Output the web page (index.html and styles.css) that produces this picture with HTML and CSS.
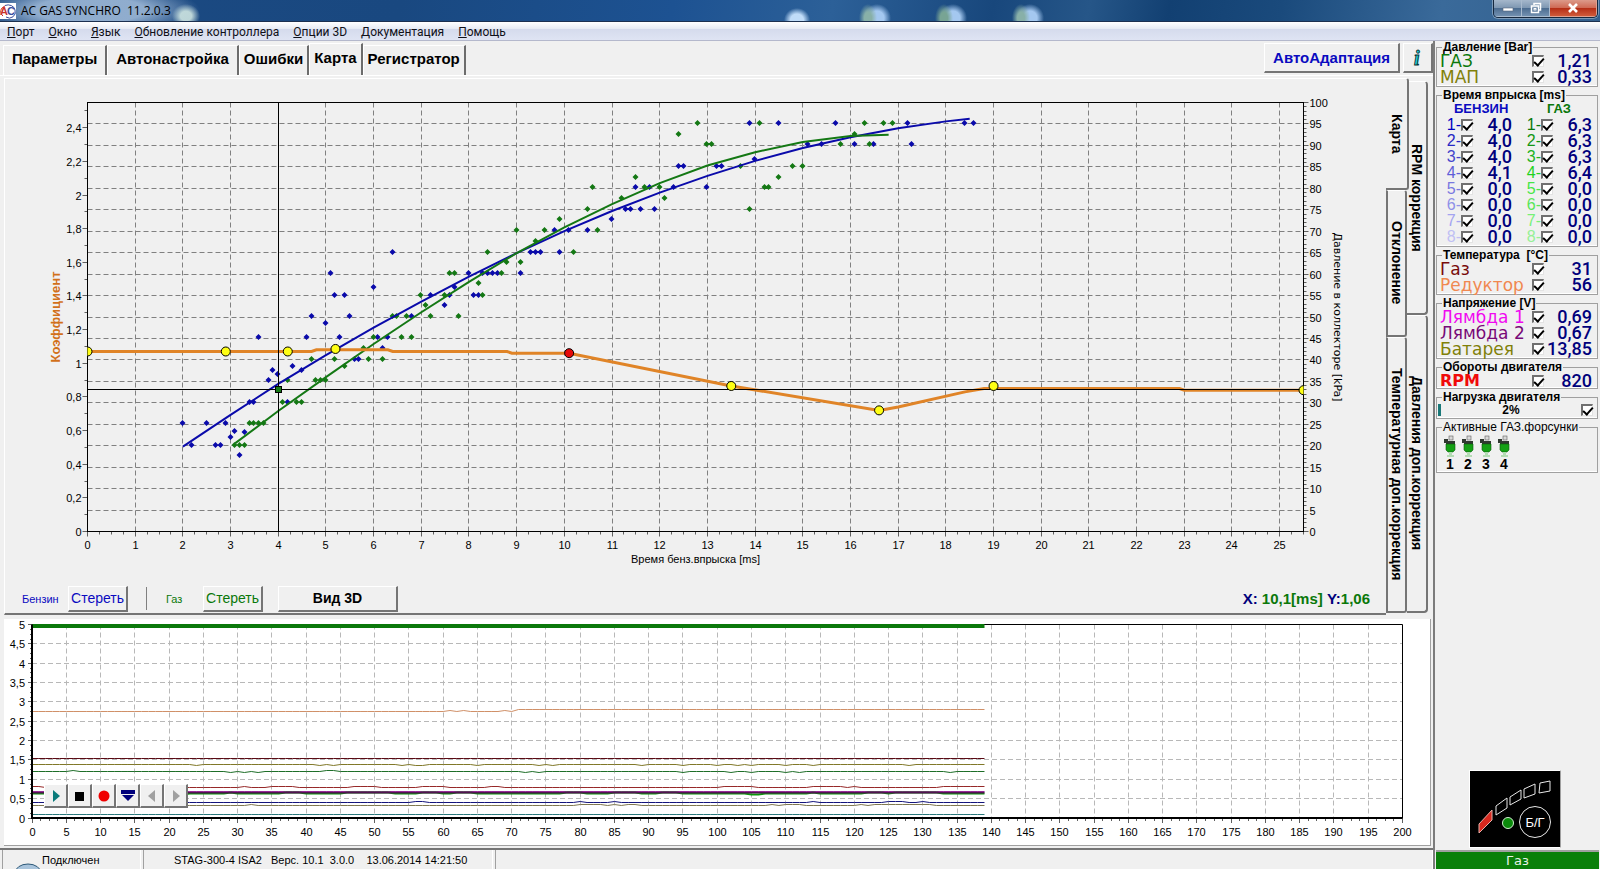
FILE: index.html
```html
<!DOCTYPE html>
<html lang="ru">
<head>
    <meta charset="UTF-8">
    <meta name="viewport" content="width=device-width, initial-scale=1.0">
    <title>AC GAS SYNCHRO 11.2.0.3</title>
    <link rel="stylesheet" href="styles.css">
</head>
<body>
    <div class="app">
        <header class="titlebar">
            <svg class="logo" width="16" height="16" viewBox="0 0 16 16">
                <rect width="16" height="16" fill="#fff"/>
                <path d="M3 13A7 6 0 0 1 5 3" fill="none" stroke="#c8322c" stroke-width="1"/>
                <path d="M5 2.500A7 6 0 0 1 15 7A6 6 0 0 1 6 14" fill="none" stroke="#3a4d9c" stroke-width="1"/>
                <text x="0" y="12" class="logo-a">A</text>
                <text x="7" y="12" class="logo-c">C</text>
            </svg>
            <span class="title">AC GAS SYNCHRO&nbsp; 11.2.0.3</span>
            <div class="window-buttons">
                <button aria-label="Свернуть"><svg width="12" height="12"><rect x="1" y="6" width="10" height="3" fill="#fff" stroke="#56657c" stroke-width=".6"/></svg></button>
                <button aria-label="Восстановить"><svg width="12" height="12" fill="none" stroke="#fff" stroke-width="1.500"><path d="M4 3V1.500H10.500V8H9"/><rect x="1.500" y="4" width="7" height="6.500"/><rect x="4" y="6.500" width="2" height="1.500" stroke-width="1"/></svg></button>
                <button class="close" aria-label="Закрыть"><svg width="12" height="12"><path d="M2 2L10 10M10 2L2 10" stroke="#fff" stroke-width="2.600"/></svg></button>
            </div>
        </header>

        <nav class="menu">
            <a href="#"><u>П</u>орт</a>
            <a href="#"><u>О</u>кно</a>
            <a href="#"><u>Я</u>зык</a>
            <a href="#"><u>О</u>бновление контроллера</a>
            <a href="#"><u>О</u>пции 3D</a>
            <a href="#"><u>Д</u>окументация</a>
            <a href="#"><u>П</u>омощь</a>
        </nav>

        <div class="main">
            <div class="left">
                <div class="top-row">
                    <div class="tabs">
                        <button class="tab tab-wide">Параметры</button>
                        <button class="tab tab-wide">Автонастройка</button>
                        <button class="tab">Ошибки</button>
                        <button class="tab active">Карта</button>
                        <button class="tab">Регистратор</button>
                    </div>
                    <button class="btn auto">АвтоАдаптация</button>
                    <button class="btn info" aria-label="Информация">
                        <svg width="14" height="20"><text x="3" y="17" class="info-i">i</text></svg>
                    </button>
                </div>

                <div class="map">
                    <div class="map-body">
                        <svg id="map-chart" class="chart"></svg>
                        <div class="map-tools">
                            <span class="small blue">Бензин</span>
                            <button class="btn erase blue">Стереть</button>
                            <span class="line"></span>
                            <span class="small green gas-label">Газ</span>
                            <button class="btn erase green">Стереть</button>
                            <button class="btn view">Вид 3D</button>
                            <span class="coords"><b>X:</b> 10,1[ms] <b>Y:</b>1,06</span>
                        </div>
                    </div>
                    <div class="side-tabs inner">
                        <button class="selected">Карта</button>
                        <button class="deviation">Отклонение</button>
                        <button class="temp">Температурная доп.коррекция</button>
                    </div>
                    <div class="side-tabs outer">
                        <button class="rpm">RPM коррекция</button>
                        <button class="pressure">Давления доп.коррекция</button>
                    </div>
                </div>

                <div class="recorder">
                    <svg id="rec-chart" class="chart"></svg>
                    <div class="player">
                        <button class="btn" aria-label="Пуск"><svg width="14" height="14"><path d="M4 1L11 7L4 13Z" fill="#0a7a7a"/></svg></button>
                        <button class="btn" aria-label="Стоп"><svg width="14" height="14"><rect x="2" y="3" width="9" height="9"/></svg></button>
                        <button class="btn" aria-label="Запись"><svg width="14" height="14"><circle cx="7" cy="7" r="5.500" fill="#f00000"/></svg></button>
                        <button class="btn" aria-label="Сохранить"><svg width="14" height="14" fill="#00007c"><rect x="0" y="1" width="14" height="4"/><path d="M1 6H13L7 12Z"/></svg></button>
                        <button class="btn" aria-label="Назад"><svg width="14" height="14"><path d="M10 1L3 7L10 13Z" fill="#a0a0a0"/></svg></button>
                        <button class="btn" aria-label="Вперёд"><svg width="14" height="14"><path d="M4 1L11 7L4 13Z" fill="#a0a0a0"/></svg></button>
                    </div>
                </div>

                <footer class="status">
                    <div class="cell state">
                        <svg class="orb" width="28" height="6"><ellipse cx="14" cy="10" rx="13" ry="9" fill="#a9c4dc" stroke="#2c5878"/></svg>
                        Подключен
                    </div>
                    <div class="cell device">STAG-300-4 ISA2&nbsp;&nbsp; Верс. 10.1&nbsp; 3.0.0&nbsp;&nbsp;&nbsp; 13.06.2014 14:21:50</div>
                    <div class="cell rest"></div>
                </footer>
            </div>

            <aside class="panel">
                <fieldset>
                    <legend>Давление [Bar]</legend>
                    <label class="row"><span class="c-gas">ГАЗ</span><input type="checkbox" checked><output>1,21</output></label>
                    <label class="row"><span class="c-map">МАП</span><input type="checkbox" checked><output>0,33</output></label>
                </fieldset>

                <fieldset>
                    <legend>Время впрыска [ms]</legend>
                    <div class="inj-head"><span class="blue">БЕНЗИН</span><span class="green">ГАЗ</span></div>
                    <div id="injection"></div>
                </fieldset>

                <fieldset>
                    <legend>Температура&nbsp; [°C]</legend>
                    <label class="row"><span class="c-tgas">Газ</span><input type="checkbox" checked><output>31</output></label>
                    <label class="row"><span class="c-red">Редуктор</span><input type="checkbox" checked><output>56</output></label>
                </fieldset>

                <fieldset>
                    <legend>Напряжение [V]</legend>
                    <label class="row"><span class="c-l1">Лямбда 1</span><input type="checkbox" checked><output>0,69</output></label>
                    <label class="row"><span class="c-l2">Лямбда 2</span><input type="checkbox" checked><output>0,67</output></label>
                    <label class="row"><span class="c-map">Батарея</span><input type="checkbox" checked><output>13,85</output></label>
                </fieldset>

                <fieldset class="low">
                    <legend>Обороты двигателя</legend>
                    <label class="row"><span class="c-rpm">RPM</span><input type="checkbox" checked><output>820</output></label>
                </fieldset>

                <fieldset class="low">
                    <legend>Нагрузка двигателя</legend>
                    <label class="load"><span class="load-bar" style="width: 2%"></span><span class="load-text">2%</span><input type="checkbox" checked></label>
                </fieldset>

                <fieldset class="injectors">
                    <legend class="plain">Активные ГАЗ.форсунки</legend>
                    <div id="injectors" class="injector-list"></div>
                </fieldset>

                <div class="switch">
                    <svg width="90" height="76" viewBox="0 0 90 76">
                        <path d="M9 53L22 39V49L9 62Z" fill="#d8281e" stroke="#e8b0a8"/>
                        <g fill="none" stroke="#e8e8e8">
                            <path d="M26 35L37 27V37L26 44Z"/>
                            <path d="M40 26L51 19V28L40 34Z"/>
                            <path d="M54 18L65 13V23L54 27Z"/>
                            <path d="M70 12L80 10V20L69 22Z"/>
                            <circle cx="65" cy="51" r="15.500"/>
                        </g>
                        <circle cx="38" cy="52" r="5.500" fill="#0a8a0a" stroke="#d0f0d0"/>
                        <text x="65" y="56" class="switch-text">Б/Г</text>
                    </svg>
                </div>
                <div class="fuel">Газ</div>
            </aside>
        </div>
    </div>

    <script src="script.js"></script>
</body>
</html>
```

FILE: styles.css
```css
* {
    box-sizing: border-box;
}

body {
    margin: 0;
    padding-bottom: 7px;
    background-color: #fff;
    font-family: "Liberation Sans", Arial, sans-serif;
    font-size: 11px;
    color: #000;
}

button {
    font-family: inherit;
    padding: 0;
    cursor: pointer;
}

svg {
    display: block;
}

.app {
    display: flex;
    flex-direction: column;
    height: calc(100vh - 7px);
    min-height: 700px;
    background-color: #f0f0f0;
}

.blue {
    color: #0a0ac0;
}

.green {
    color: #0a780a;
}

/* title bar */

.titlebar {
    display: flex;
    align-items: center;
    height: 22px;
    border-bottom: 1px solid #1c3050;
    background:
        radial-gradient(ellipse 14px 12px at 186px 16px, rgba(205, 228, 225, 0.9) 40%, transparent),
        radial-gradient(ellipse 110px 26px at 90px 10px, rgba(150, 178, 210, 0.95) 50%, transparent),
        radial-gradient(ellipse 13px 12px at 797px 20px, #c0dcf8 50%, transparent),
        radial-gradient(ellipse 9px 14px at 868px 18px, #88b0a8 40%, transparent),
        radial-gradient(ellipse 14px 14px at 877px 18px, #a4c8f0 50%, transparent),
        radial-gradient(ellipse 9px 14px at 944px 18px, #78a494 40%, transparent),
        radial-gradient(ellipse 14px 14px at 953px 18px, #a4c8f0 50%, transparent),
        radial-gradient(ellipse 9px 14px at 1021px 18px, #88b0a8 40%, transparent),
        radial-gradient(ellipse 14px 14px at 1030px 18px, #a4c8f0 50%, transparent),
        linear-gradient(100deg, #1c4a82 0%, #194880 25%, #1d5292 42%, #2c6098 52%, #18477c 62%, #265688 68%, #124072 73%, #1a4a7c 80%, #3a6a9a 90%, #33608e 100%);
}

.logo-a,
.logo-c {
    font-family: "Liberation Sans", Arial, sans-serif;
    font-weight: bold;
    font-size: 11px;
    fill: #c8322c;
}

.logo-c {
    fill: #3a4d9c;
}

.title {
    margin-left: 5px;
    font-family: "Open Sans", "Noto Sans", sans-serif;
    font-size: 12px;
    line-height: 20px;
    flex: 1;
}

.window-buttons {
    display: flex;
    align-self: flex-start;
    height: 18px;
    margin-right: 2px;
    border: 1px solid #16283e;
    border-top: none;
    border-radius: 0 0 5px 5px;
    overflow: hidden;
    box-shadow: 0 0 0 1px rgba(255, 255, 255, 0.35);
}

.window-buttons button {
    display: flex;
    align-items: center;
    justify-content: center;
    width: 28px;
    border: 1px solid #a8bace;
    border-width: 0 1px 1px 0;
    background: linear-gradient(#a5b7cb, #7f98b3 48%, #4c6c90 52%, #7290b0);
}

.window-buttons .close {
    width: 47px;
    border-color: #e0a090;
    background: linear-gradient(#dc9a8a, #cf6a55 48%, #b52e16 52%, #cf5a3a);
}

/* menu */

.menu {
    display: flex;
    gap: 14px;
    height: 19px;
    padding-left: 7px;
    border-bottom: 1px solid #b4b8cc;
    background: linear-gradient(#fff, #e8ecf5 36%, #d5dbed 40%, #dfe4f3);
    font-family: Roboto, "Open Sans", sans-serif;
    font-size: 12px;
    line-height: 20px;
}

.menu a {
    color: #101018;
    text-decoration: none;
    white-space: nowrap;
}

/* work area */

.main {
    display: flex;
    flex: 1;
    min-height: 0;
}

.left {
    display: flex;
    flex-direction: column;
    flex: 1;
    min-width: 0;
    border-right: 2px solid #7c7c7c;
}

.top-row {
    display: flex;
    align-items: flex-start;
    height: 35px;
    padding: 2px 0 0 3px;
    border-bottom: 1px solid #fff;
}

.tabs {
    display: flex;
    align-items: flex-end;
    flex: 1;
}

.tab {
    height: 30px;
    padding: 0 4px 4px;
    border: 1px solid #fff;
    border-right: 2px solid #6c6c6c;
    border-bottom: none;
    background-color: #f0f0f0;
    font-size: 15px;
    font-weight: bold;
}

.tab-wide {
    padding: 0 8px 4px;
}

.tab.active {
    height: 32px;
}

.btn {
    display: flex;
    align-items: center;
    justify-content: center;
    border: 1px solid #fff;
    border-right: 2px solid #757575;
    border-bottom: 2px solid #757575;
    background-color: #f0f0f0;
}

.auto {
    width: 136px;
    height: 30px;
    color: #0a0ac0;
    font-size: 15px;
    font-weight: bold;
}

.info {
    width: 30px;
    height: 30px;
    margin-left: 3px;
}

.info-i {
    font: italic bold 20px "Liberation Serif", serif;
    fill: #20d0d8;
    stroke: #083838;
    stroke-width: 1;
}

.map {
    display: flex;
    flex: 1;
    min-height: 0;
    margin: 2px 5px 0 4px;
}

.map-body {
    display: flex;
    flex-direction: column;
    flex: 1;
    min-width: 0;
    border-top: 1px solid #fff;
    border-left: 1px solid #fff;
    border-bottom: 2px solid #757575;
}

.chart {
    width: 100%;
    flex: 1;
    min-height: 0;
}

.map-tools {
    display: flex;
    align-items: center;
    height: 29px;
    padding: 0 16px 0 17px;
}

.erase {
    width: 60px;
    height: 26px;
    font-size: 14px;
}

.map-tools .erase {
    margin-left: 10px;
}

.small {
    width: 36px;
}

.line {
    width: 1px;
    height: 23px;
    margin: 0 19px 0 18px;
    background-color: #808080;
}

.gas-label {
    width: 27px;
}

.view {
    width: 120px;
    height: 26px;
    margin-left: 15px;
    font-size: 14px;
    font-weight: bold;
}

.coords {
    margin-left: auto;
    color: #0a780a;
    font-size: 15px;
    font-weight: bold;
}

.coords b {
    color: #00007c;
}

.side-tabs {
    display: flex;
    flex-direction: column;
    width: 21px;
    padding-bottom: 2px;
}

.side-tabs.outer {
    padding-top: 3px;
}

.side-tabs button {
    display: flex;
    align-items: center;
    justify-content: center;
    width: 21px;
    border: 1px solid #fff;
    border-left: none;
    border-right: 2px solid #757575;
    border-bottom: 2px solid #757575;
    border-radius: 0 4px 4px 0;
    background-color: #f0f0f0;
    font-size: 14px;
    font-weight: bold;
    writing-mode: vertical-rl;
    white-space: nowrap;
}

.side-tabs.inner button {
    border-left: 2px solid #757575;
    border-radius: 0 3px 3px 0;
}

.side-tabs.inner .selected {
    flex: 110;
    width: 23px;
    border-left: none;
    border-top-color: #fff;
    z-index: 1;
}

.deviation {
    flex: 146;
}

.temp {
    flex: 276;
}

.rpm {
    flex: 232;
}

.pressure {
    flex: 297;
}

/* recorder */

.recorder {
    display: flex;
    position: relative;
    height: 227px;
    margin: 4px 2px 0 4px;
    border-right: 1px solid #a0a0a0;
    border-bottom: 1px solid #a0a0a0;
    background-color: #fff;
}

.player {
    display: flex;
    position: absolute;
    left: 40px;
    bottom: 37px;
}

.player .btn {
    width: 24px;
    height: 24px;
}

/* chart text and lines */

.axis-text {
    font-size: 11px;
    fill: #000;
}

.middle {
    text-anchor: middle;
}

.end {
    text-anchor: end;
}

.coef-title {
    font-size: 13px;
    font-weight: bold;
    fill: #d2701a;
}

.kpa-title {
    font-family: "DejaVu Sans", sans-serif;
    font-size: 11px;
}

.switch-text {
    font-size: 13px;
    fill: #fff;
    text-anchor: middle;
}

/* status bar */

.status {
    display: flex;
    height: 21px;
    margin-top: 2px;
    border-top: 2px solid #757575;
    line-height: 20px;
}

.cell {
    border-left: 1px solid #a0a0a0;
    border-right: 1px solid #fff;
    margin-left: 2px;
}

.state {
    position: relative;
    width: 139px;
    padding-left: 39px;
}

.orb {
    position: absolute;
    left: 11px;
    bottom: 0;
}

.device {
    width: 350px;
    padding-left: 30px;
    white-space: pre;
}

.rest {
    flex: 1;
}

/* right panel */

.panel {
    display: flex;
    flex-direction: column;
    gap: 2px;
    width: 165px;
    padding: 0 2px 0 1px;
}

fieldset {
    min-width: 0;
    margin: 0;
    padding: 0 5px 1px 3px;
    border: 1px solid #a0a0a0;
    box-shadow: inset 0 -1px 0 #fff;
}

legend {
    padding: 0 1px;
    margin-left: 2px;
    font-size: 12px;
    font-weight: bold;
    line-height: 12px;
}

legend.plain {
    font-weight: normal;
}

input[type="checkbox"] {
    appearance: none;
    position: relative;
    width: 12px;
    height: 12px;
    margin: 0;
    border: 1px solid #e3e3e3;
    border-top: 2px solid #707070;
    border-left: 2px solid #707070;
    background-color: #fff;
}

input[type="checkbox"]:checked::after {
    content: "";
    position: absolute;
    left: 2px;
    top: -1px;
    width: 4px;
    height: 8px;
    border: solid #000;
    border-width: 0 2px 2px 0;
    transform: rotate(42deg);
}

.row {
    display: grid;
    grid-template-columns: 1fr 12px 48px;
    align-items: center;
    height: 16px;
    font-family: "DejaVu Sans", sans-serif;
    font-size: 17px;
    line-height: 16px;
    white-space: nowrap;
}

.low .row {
    height: 14px;
}

output {
    color: #00007c;
    font-family: Roboto, "Liberation Sans", sans-serif;
    font-size: 18px;
    font-weight: 500;
    line-height: 16px;
    text-align: right;
}

.c-gas { color: #0a780a; }
.c-map { color: #80800a; }
.c-tgas { color: #780a0a; }
.c-red { color: #f08850; }
.c-l1 { color: #f00af0; }
.c-l2 { color: #780a78; }

.c-rpm {
    color: #f00a0a;
    font-size: 16px;
    font-weight: bold;
}

.inj-head {
    display: flex;
    justify-content: space-between;
    height: 16px;
    padding: 0 21px 0 14px;
    font-size: 13px;
    font-weight: bold;
    line-height: 16px;
}

.inj-row {
    display: grid;
    grid-template-columns: 1fr 80px;
}

.inj-row label {
    display: grid;
    grid-template-columns: 1fr 12px 39px;
    align-items: center;
    height: 16px;
    font-size: 16px;
    line-height: 16px;
    text-align: right;
}

.load {
    display: flex;
    align-items: center;
    height: 14px;
}

.load-bar {
    height: 12px;
    margin-left: -2px;
    background-color: #1a7878;
}

.load-text {
    flex: 1;
    font-size: 12px;
    font-weight: bold;
    text-align: center;
}

.load input {
    margin-right: -1px;
}

.injector-list {
    display: flex;
    gap: 4px;
    padding-left: 3px;
    height: 38px;
}

.injector {
    width: 14px;
    font-size: 14px;
    font-weight: bold;
    line-height: 14px;
    text-align: center;
}

.switch {
    align-self: center;
    margin: auto 5px 0 0;
    border: 1px solid #fff;
    border-right-color: #a0a0a0;
    background-color: #000;
}

.fuel {
    height: 19px;
    margin-right: -1px;
    border-top: 2px solid #a0a0a0;
    background-color: #0a800a;
    color: #e8f4e8;
    font-family: "DejaVu Sans", sans-serif;
    font-size: 13px;
    line-height: 17px;
    text-align: center;
}
```

FILE: script.js
```js
const SVG_NS = 'http://www.w3.org/2000/svg';

const petrolDots = [
    [2, 25], [2.5, 25], [2.9, 25], [2.2, 20], [2.7, 20], [2.8, 20], [3, 21.7], [3.1, 23.3], [3.3, 23], [3.2, 17.5],
    [3.4, 30], [3.5, 30], [3.8, 35], [3.9, 37.5], [4, 36.5], [4.3, 38.3], [4.5, 37.5], [4.2, 30], [3.6, 45], [4.6, 45],
    [4.7, 50], [5, 48.3], [5.1, 60], [5.2, 55], [5.4, 55], [5.5, 50], [5.3, 45], [5.6, 40], [5.7, 40], [6, 56.7],
    [6.1, 45], [6.3, 45], [6.2, 42.5], [6.4, 65], [6.8, 50], [7.2, 55], [7.5, 52.5], [7.6, 55], [7.7, 56.7], [8, 60],
    [8.1, 55], [8.2, 55], [8.3, 60], [8.4, 60], [8.5, 60], [8.6, 60], [9.1, 60], [9.3, 65], [9.4, 65], [9.5, 65],
    [9.9, 65], [9.8, 70], [10.1, 70], [10.5, 70], [11, 72.5], [11.3, 75], [11.4, 75], [11.6, 75], [11.9, 75],
    [11.5, 80], [11.8, 80], [12.3, 80], [13, 80], [12.4, 85], [12.5, 85], [13.2, 85], [13.3, 85], [14, 86.7],
    [13.9, 95], [14.5, 95], [15.7, 95], [17.2, 95], [15.1, 90], [15.4, 90], [16.1, 90], [16.5, 90], [17.3, 90],
    [18.4, 95], [18.6, 95]
];

const gasDots = [
    [3.1, 20], [3.2, 20], [3.3, 20], [3.4, 25], [3.5, 25], [3.6, 25], [3.7, 25], [4.1, 30], [4.4, 30], [4.5, 30],
    [4.2, 35], [4.8, 35], [4.9, 35], [5, 35], [4.7, 40], [5.2, 40], [5.9, 40], [6.2, 40], [5.4, 38.3], [5.8, 42.5],
    [6, 45], [6.6, 45], [6.8, 45], [6.4, 50], [6.5, 50], [6.7, 50], [7.2, 50], [7.8, 50], [7, 55], [7.5, 55],
    [8.3, 55], [7.1, 52.5], [7.6, 60], [7.7, 60], [8.7, 60], [8.2, 57.7], [8.4, 65], [8.8, 62.5], [9.1, 62.5],
    [9, 70], [9.4, 67.5], [9.6, 70], [9.9, 72.5], [10.2, 65], [10.7, 70], [10.5, 75], [10.6, 80], [11.2, 77.5],
    [11.5, 82.5], [11.7, 80], [12, 80], [12.1, 77.5], [12.4, 92.5], [12.8, 95], [13, 90], [13.1, 90], [13.7, 85],
    [13.9, 75], [14.1, 95], [14.2, 80], [14.3, 80], [14.5, 82.5], [14.8, 85], [15, 85], [15.8, 90], [16.1, 92.5],
    [16.4, 90], [16.3, 95], [16.7, 95], [16.9, 95]
];

const petrolCurve = [
    [2, 19.8], [3, 27.2], [4, 34.4], [5, 41.1], [6, 47.5], [7, 53.6], [8, 59.4], [9, 64.9], [10, 70], [11, 74.7],
    [12, 79], [13, 82.9], [14, 86.4], [15, 89.4], [16, 91.9], [17, 94], [18, 95.6], [18.5, 96.2]
];

const gasCurve = [
    [3.1, 20.6], [4, 28.1], [5, 36], [6, 43.7], [7, 51.1], [8, 58.2], [9, 64.9], [10, 70.9], [11, 76.3], [12, 81.2],
    [13, 85.3], [14, 88.4], [15, 90.8], [16, 92.2], [16.8, 92.5]
];

const coefLine = [
    [0, 1.07], [4.7, 1.07], [4.8, 1.08], [6.3, 1.08], [6.4, 1.07], [8.8, 1.07], [8.9, 1.06], [10.1, 1.06],
    [13.5, 0.865], [16.6, 0.72], [17, 0.74], [18.4, 0.83], [18.8, 0.85], [22.9, 0.85], [23, 0.84], [25.5, 0.84]
];

const coefPoints = [[0, 1.07], [2.9, 1.07], [4.2, 1.07], [5.2, 1.085], [10.1, 1.06], [13.5, 0.865], [16.6, 0.72], [19, 0.865], [25.5, 0.84]];

// bumps: [from, to, change]
const records = [
    { color: '#d09068', base: 2.76, bumps: [[61, 61, .03], [63, 63, .03], [69, 69, .03], [71, 139, .04]] },
    { color: '#5a0a14', base: 1.54, bumps: [] },
    { color: '#807828', base: 1.39, bumps: [24, 42, 44, 54, 56, 57, 65, 74, 76, 89, 95, 100, 103, 105, 110, 114, 128].map(x => [x, x, -.03]) },
    { color: '#1e6e28', base: 1.21, bumps: [[6, 6, .02], [29, 29, -.03], [31, 31, -.03], [33, 33, -.03], [43, 44, .03]].concat([72, 74, 95, 102, 105, 110, 112, 134].map(x => [x, x, -.03])) },
    { color: '#962828', base: .8, bumps: [[0, 1, .02], [31, 31, .02], [35, 38, .02], [41, 44, -.02], [47, 50, .02], [57, 60, .02], [67, 68, .02], [79, 82, -.02], [84, 88, -.02], [101, 105, .02], [107, 110, -.02], [114, 118, .02], [120, 120, .02], [123, 128, -.02], [133, 139, .02]] },
    { color: '#e040e0', base: .69, bumps: [] },
    { color: '#0a960a', base: .64, width: 2, bumps: [[20, 22, -.02], [29, 29, .02], [37, 39, .02], [46, 52, .02], [57, 59, .02], [62, 64, .02], [78, 80, .03], [85, 88, .03], [92, 94, .02], [105, 106, -.02], [114, 114, .02], [122, 124, .02], [126, 132, .03]] },
    { color: '#501450', base: .66, width: 2, bumps: [] },
    { color: '#14147c', base: .41, bumps: [[56, 57, .02], [80, 80, .02], [85, 85, .02], [106, 106, -.02], [114, 114, .02], [125, 127, .02], [130, 130, .02]] },
    { color: '#807850', base: .33, bumps: [[32, 32, .03], [80, 83, .03], [85, 85, .02], [87, 88, .03], [108, 108, .03], [110, 112, .03], [121, 121, .03], [123, 131, .03]] },
    { color: '#28787c', base: .1, bumps: [] }
];

function add(parent, name, attrs, text) {
    const node = document.createElementNS(SVG_NS, name);
    for (const key in attrs) {
        node.setAttribute(key, attrs[key]);
    }
    if (text !== undefined) {
        node.textContent = text;
    }
    parent.appendChild(node);
    return node;
}

function line(svg, x1, y1, x2, y2, stroke, extra) {
    add(svg, 'line', Object.assign({ x1: x1, y1: y1, x2: x2, y2: y2, stroke: stroke }, extra));
}

function snap(v) {
    return Math.floor(v) + 0.5;
}

function comma(v) {
    return String(Math.round(v * 10) / 10).replace('.', ',');
}

function polyline(svg, points, stroke, width) {
    add(svg, 'polyline', { points: points.map(p => p.join(',')).join(' '), fill: 'none', stroke: stroke, 'stroke-width': width });
}

function drawMap() {
    const svg = document.getElementById('map-chart');
    const w = svg.clientWidth;
    const h = svg.clientHeight;
    const left = 82.5, right = w - 82.5, top = 23.5, bottom = h - 52.5;
    const px = v => left + v * (right - left) / 25.5;
    const pk = v => bottom - v * (bottom - top) / 100;
    const pc = v => bottom - v * (bottom - top) / 2.55;
    svg.innerHTML = '';

    const dash = { 'stroke-dasharray': '5 3' };
    for (let x = 1; x <= 25; x++) {
        if (x !== 4) {
            line(svg, snap(px(x)), top, snap(px(x)), bottom, '#808080', dash);
        }
    }
    for (let k = 5; k < 100; k += 5) {
        line(svg, left, snap(pk(k)), right, snap(pk(k)), '#808080', dash);
    }

    // axis ticks and numbers
    for (let i = 0; i <= 102; i++) {
        const x = snap(px(i / 4));
        line(svg, x, bottom, x, bottom + (i % 4 ? 3 : 5), '#606060');
        if (i % 4 === 0) {
            add(svg, 'text', { x: x, y: bottom + 17, class: 'axis-text middle' }, i / 4);
        }
    }
    for (let i = 0; i <= 25; i++) {
        const y = snap(pc(i / 10));
        line(svg, left - (i % 2 ? 3 : 5), y, left, y, '#606060');
        if (i % 2 === 0) {
            add(svg, 'text', { x: left - 6, y: y + 4, class: 'axis-text end' }, comma(i / 10));
        }
    }
    for (let k = 0; k <= 100; k++) {
        const y = snap(pk(k));
        line(svg, right, y, right + (k % 5 ? 3 : 5), y, '#606060');
        if (k % 5 === 0) {
            add(svg, 'text', { x: right + 6, y: y + 4, class: 'axis-text' }, k);
        }
    }

    const midY = (top + bottom) / 2;
    add(svg, 'text', { x: px(12.75), y: bottom + 31, class: 'axis-text middle' }, 'Время бенз.впрыска [ms]');
    add(svg, 'text', { transform: `translate(55 ${midY}) rotate(-90)`, class: 'coef-title middle' }, 'Коэффициент');
    add(svg, 'text', { transform: `translate(${right + 30} ${midY}) rotate(90)`, class: 'kpa-title middle' }, 'Давление в коллекторе [kPa]');

    drawDots(svg, petrolDots, '#0a0aaa', px, pk);
    drawDots(svg, gasDots, '#147814', px, pk);

    polyline(svg, petrolCurve.map(p => [px(p[0]), pk(p[1])]), '#0a0aaa', 2);
    polyline(svg, gasCurve.map(p => [px(p[0]), pk(p[1])]), '#147814', 2);
    polyline(svg, coefLine.map(p => [px(p[0]), pc(p[1])]), '#e08427', 3);

    add(svg, 'rect', { x: left, y: top, width: right - left, height: bottom - top, fill: 'none', stroke: '#000' });

    // crosshair of the current working point
    line(svg, snap(px(4)), top, snap(px(4)), bottom, '#000');
    line(svg, left, snap(pk(33)), right, snap(pk(33)), '#000');
    add(svg, 'rect', { x: snap(px(4)) - 3, y: snap(pk(33)) - 3, width: 6, height: 6, fill: '#147814', stroke: '#000' });

    const clip = add(svg, 'clipPath', { id: 'plot' });
    add(clip, 'rect', { x: left, y: top, width: right - left, height: bottom - top });
    const group = add(svg, 'g', { 'clip-path': 'url(#plot)' });
    coefPoints.forEach(p => {
        add(group, 'circle', { cx: px(p[0]), cy: pc(p[1]), r: 4.5, fill: p[0] === 10.1 ? '#e60a0a' : '#ffff14', stroke: '#000' });
    });
}

function drawDots(svg, dots, color, px, pk) {
    const d = dots.map(p => {
        const x = Math.round(px(p[0]) - 1);
        const y = Math.round(pk(p[1]) - 1);
        return `M${x - 2.5} ${y}l3 -3l3 3l-3 3Z`;
    }).join('');
    add(svg, 'path', { d: d, fill: color });
}

function drawRecorder() {
    const svg = document.getElementById('rec-chart');
    const w = svg.clientWidth;
    const h = svg.clientHeight;
    const left = 28, right = w - 27.5, top = 5.5, bottom = h - 27;
    const px = v => left + v * (right - left) / 200;
    const py = v => bottom - v * (bottom - top) / 5;
    svg.innerHTML = '';

    const dash = { 'stroke-dasharray': '5 3' };
    for (let x = 5; x < 200; x += 5) {
        line(svg, snap(px(x)), top, snap(px(x)), bottom, '#b8b8b8', dash);
    }
    for (let y = 0.5; y < 5; y += 0.5) {
        line(svg, left, snap(py(y)), right, snap(py(y)), '#b8b8b8', dash);
    }
    for (let i = 0; i <= 160; i++) {
        const x = snap(px(i * 1.25));
        line(svg, x, bottom, x, bottom + (i % 4 ? 3 : 5), '#606060');
        if (i % 4 === 0) {
            add(svg, 'text', { x: x, y: bottom + 18, class: 'axis-text middle' }, i * 1.25);
        }
    }
    for (let i = 0; i <= 40; i++) {
        const y = snap(py(i / 8));
        line(svg, left - (i % 4 ? 2 : 4), y, left, y, '#606060');
        if (i % 4 === 0) {
            add(svg, 'text', { x: left - 7, y: y + 4, class: 'axis-text end' }, comma(i / 8));
        }
    }

    line(svg, left, top, right, top, '#000');
    line(svg, right, top, right, bottom, '#000');
    records.forEach(rec => {
        const points = [];
        for (let x = 0; x <= 139; x++) {
            let value = rec.base;
            rec.bumps.forEach(b => {
                if (x >= b[0] && x <= b[1]) {
                    value += b[2];
                }
            });
            points.push([px(x), snap(py(value))]);
        }
        polyline(svg, points, rec.color, rec.width || 1);
    });
    line(svg, left, top + 1.5, px(139), top + 1.5, '#0a780a', { 'stroke-width': 4 });
    line(svg, left, top, left, bottom + 1, '#000', { 'stroke-width': 2 });
    line(svg, left, bottom, right, bottom, '#000', { 'stroke-width': 2 });
}

function fillPanel() {
    const petrol = ['4,0', '4,0', '4,0', '4,1', '0,0', '0,0', '0,0', '0,0'];
    const gas = ['6,3', '6,3', '6,3', '6,4', '0,0', '0,0', '0,0', '0,0'];
    const blues = ['#0000c0', '#2828c4', '#4444cc', '#5e5ed8', '#7878e0', '#9090e8', '#a4a4f0', '#c0c0f4'];
    const greens = ['#0a780a', '#149614', '#1eb41e', '#1ed21e', '#46e646', '#5ae65a', '#78f078', '#96f096'];
    let html = '';
    for (let i = 0; i < 8; i++) {
        html += `<div class="inj-row">
            <label><span style="color: ${blues[i]}">${i + 1}-</span><input type="checkbox" checked><output>${petrol[i]}</output></label>
            <label><span style="color: ${greens[i]}">${i + 1}-</span><input type="checkbox" checked><output>${gas[i]}</output></label>
        </div>`;
    }
    document.getElementById('injection').innerHTML = html;

    html = '';
    for (let i = 1; i <= 4; i++) {
        html += `<div class="injector"><svg width="14" height="24" viewBox="0 0 14 24">
            <rect x="6" y="3" width="4" height="4" fill="#d8d8d8" stroke="#606060" stroke-width=".6"/>
            <path d="M1 6H5V8H12V12H3V10H1Z" fill="#303830"/>
            <path d="M3 11H12V17L10 19H5L3 17Z" fill="#14a014" stroke="#0a5a0a" stroke-width=".6"/>
            <path d="M6 19H9V22H11V24H4V22H6Z" fill="#b4dcb4"/>
        </svg>${i}</div>`;
    }
    document.getElementById('injectors').innerHTML = html;
}

function draw() {
    drawMap();
    drawRecorder();
}

fillPanel();
draw();
window.addEventListener('resize', draw);
```
